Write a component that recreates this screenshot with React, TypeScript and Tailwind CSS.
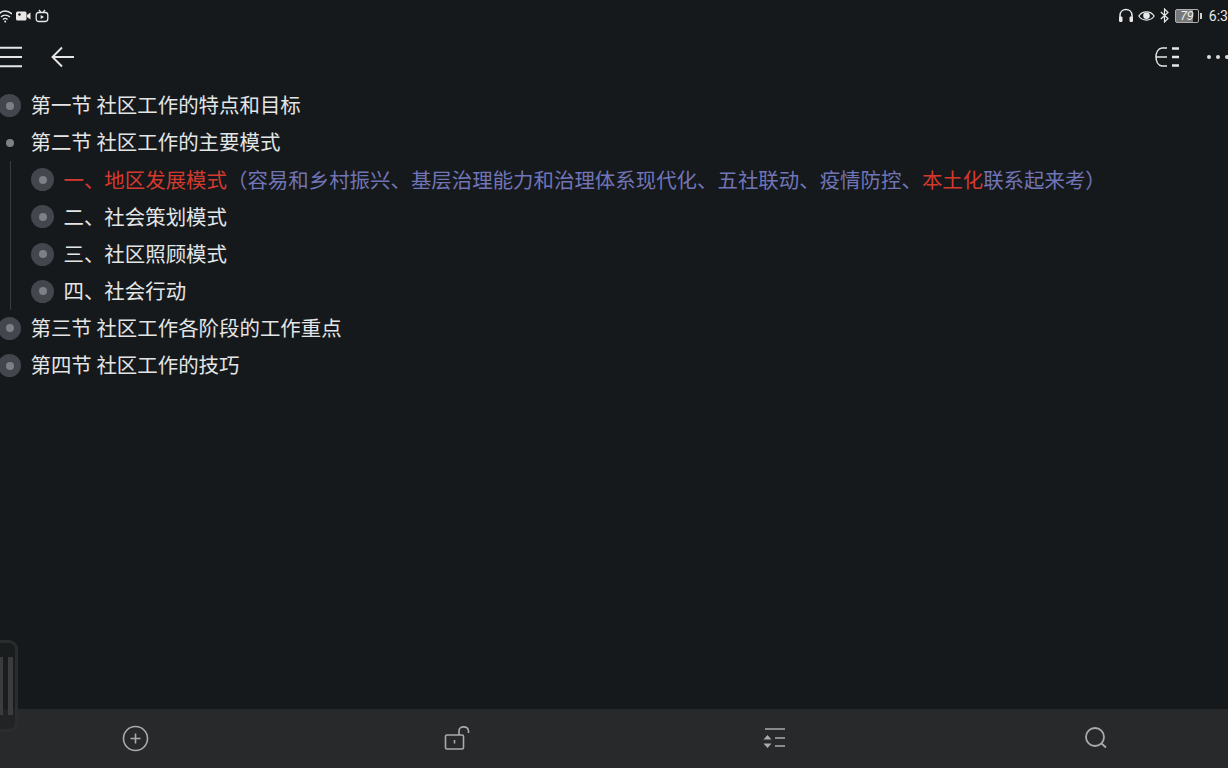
import type { ReactNode } from 'react';

const font = { fontFamily: '"Noto Sans CJK SC", "Noto Sans", sans-serif' };

// outline bullet with a halo (collapsed node)
const Bullet = ({ plain }: { plain?: boolean }) => (
  <span className={`flex h-[23px] w-[23px] shrink-0 items-center justify-center rounded-full ${plain ? '' : 'bg-[#43464c]'}`}>
    <span className="h-[8px] w-[8px] rounded-full bg-[#7d8085]" />
  </span>
);

const Row = ({ children, plain, child }: { children: ReactNode; plain?: boolean; child?: boolean }) => (
  <div className={`flex h-[37.15px] items-center whitespace-nowrap text-[20.45px] text-[#e4e5e6] ${child ? 'pl-[31px]' : 'ml-[-2px]'}`}>
    <Bullet plain={plain} />
    <span className="ml-[9.5px] pb-[2px]">{children}</span>
  </div>
);

const Red = ({ children }: { children: ReactNode }) => <span className="text-[#d5392e]">{children}</span>;
const Blue = ({ children }: { children: ReactNode }) => <span className="text-[#7174b6]">{children}</span>;

export default function App() {
  return (
    <div className="relative flex h-[768px] w-[1228px] flex-col overflow-hidden bg-[#15191b]" style={font}>
      {/* status bar */}
      <div className="flex h-[30px] shrink-0 items-center justify-between pt-[1px]">
        <div className="flex items-center gap-[4px] text-[#e8e8e8]">
          <svg width="12" height="14" viewBox="0 0 12 14" fill="none" stroke="currentColor" strokeWidth="1.4">
            <path d="M-1 5 C2 1 8 1 12 5" />
            <path d="M1 8 C3 5.5 7 5.5 10 8" />
            <path d="M3 10.5 C4.5 9 6 9 7.5 10.5" />
            <circle cx="5.2" cy="12.6" r="1" fill="currentColor" stroke="none" />
          </svg>
          <svg width="15" height="10" viewBox="0 0 15 10" fill="currentColor">
            <rect x="0" y="0.5" width="10.5" height="9" rx="1.5" />
            <path d="M11 4 L14.5 1.5 V8.5 L11 6 Z" />
            <circle cx="3.5" cy="3.5" r="1.2" fill="#15191b" />
          </svg>
          <svg width="14" height="14" viewBox="0 0 14 14" fill="none" stroke="currentColor" strokeWidth="1.3">
            <path d="M4 1 L6 3.5 M10 1 L8 3.5" />
            <rect x="1.2" y="3.5" width="11.6" height="9" rx="2.4" />
            <path d="M5.7 6 L9 8 L5.7 10 Z" fill="currentColor" stroke="none" />
          </svg>
        </div>
        <div className="flex items-center text-[#e8e8e8]">
          <svg width="16" height="15" viewBox="0 0 16 15" fill="none" stroke="currentColor" strokeWidth="1.5">
            <path d="M2 11 V7.5 C2 -0.5 14 -0.5 14 7.5 V11" />
            <rect x="1" y="8.5" width="3.5" height="5.5" rx="1.2" fill="currentColor" stroke="none" />
            <rect x="11.5" y="8.5" width="3.5" height="5.5" rx="1.2" fill="currentColor" stroke="none" />
          </svg>
          <svg className="ml-[4px]" width="17" height="12" viewBox="0 0 17 12" fill="none" stroke="currentColor" strokeWidth="1.2">
            <path d="M0.8 6 C4.5 0.5 12.5 0.5 16.2 6 C12.5 11.5 4.5 11.5 0.8 6 Z" />
            <circle cx="8.5" cy="5.8" r="3.3" fill="currentColor" stroke="none" />
          </svg>
          <svg className="ml-[5px]" width="9" height="15" viewBox="0 0 9 15" fill="none" stroke="currentColor" strokeWidth="1.2">
            <path d="M0.8 4 L8 10.5 L4.5 14 V1 L8 4.5 L0.8 11" />
          </svg>
          <div className="ml-[6px] flex h-[14px] w-[24px] items-center justify-center rounded-[2px] border border-[#b0b0b0] bg-[linear-gradient(90deg,#77787a_79%,#15191b_79%)] text-[12px] italic leading-none text-[#f0f0f0]" style={{ fontFamily: '"Liberation Sans", sans-serif' }}>
            79
          </div>
          <span className="ml-[1px] h-[6px] w-[2px] bg-[#cfcfcf]" />
          <span className="ml-[7px] text-[14px] leading-none" style={{ fontFamily: 'Roboto, sans-serif' }}>6:3</span>
        </div>
      </div>

      {/* toolbar */}
      <div className="flex h-[54px] shrink-0 items-center justify-between text-[#e6e6e6]">
        <div className="flex items-center gap-[28px]">
          <svg width="23" height="22" viewBox="0 0 23 22" stroke="currentColor" strokeWidth="2">
            <path d="M0 1.7 H22 M0 11 H22 M0 20.3 H22" />
          </svg>
          <svg width="24" height="22" viewBox="0 0 24 22" fill="none" stroke="currentColor" strokeWidth="1.9">
            <path d="M23 11 H2 M11 1.5 L1.5 11 L11 20.5" />
          </svg>
        </div>
        <div className="flex items-center gap-[27px]">
          <svg width="25" height="22" viewBox="0 0 25 22" fill="none" stroke="currentColor" strokeWidth="1.8">
            <path d="M12 2 H7 C-1 3 -1 19 7 20 H12 M0.5 11 H12" strokeWidth="1.5" />
            <path d="M17 2.5 H24 M17 11 H24 M17 19.5 H24" strokeWidth="2.4" />
          </svg>
          <div className="mr-[-1px] flex w-[22px] justify-between">
            <span className="h-[4px] w-[4px] rounded-full bg-[#dddddd]" />
            <span className="h-[4px] w-[4px] rounded-full bg-[#dddddd]" />
            <span className="h-[4px] w-[4px] rounded-full bg-[#dddddd]" />
          </div>
        </div>
      </div>

      {/* outline */}
      <div className="mt-[3px] flex-1">
        <Row>第一节 社区工作的特点和目标</Row>
        <Row plain>第二节 社区工作的主要模式</Row>
        <div className="ml-[10px] border-l border-[#3a3c3f]">
          <div className="ml-[-11px]">
            <Row child>
              <Red>一、地区发展模式</Red>
              <Blue>（容易和乡村振兴、基层治理能力和治理体系现代化、五社联动、疫情防控、</Blue>
              <Red>本土化</Red>
              <Blue>联系起来考）</Blue>
            </Row>
            <Row child>二、社会策划模式</Row>
            <Row child>三、社区照顾模式</Row>
            <Row child>四、社会行动</Row>
          </div>
        </div>
        <Row>第三节 社区工作各阶段的工作重点</Row>
        <Row>第四节 社区工作的技巧</Row>
      </div>

      {/* bottom bar */}
      <div className="flex h-[59px] shrink-0 items-center bg-[#28292b] pb-[1px] pl-[122px] text-[#a9aaab]">
        <svg width="27" height="27" viewBox="0 0 27 27" fill="none" stroke="currentColor" strokeWidth="1.6">
          <circle cx="13.5" cy="13.5" r="12" />
          <path d="M13.5 8.5 V18.5 M8.5 13.5 H18.5" />
        </svg>
        <svg className="ml-[295px]" width="26" height="26" viewBox="0 0 26 26" fill="none" stroke="currentColor" strokeWidth="1.6">
          <rect x="1.5" y="10" width="18" height="14" rx="1.5" />
          <path d="M10.5 15 V18.5" />
          <path d="M15 10 V6 C15 0.5 24 0.5 24.5 6 V8" />
        </svg>
        <svg className="ml-[293px]" width="24" height="22" viewBox="0 0 24 22" fill="none" stroke="currentColor" strokeWidth="1.7">
          <path d="M2 2 H22 M12 11 H22 M12 19 H22" />
          <path d="M0.5 12.5 L4.5 8 L8.5 12.5 Z M0.5 16.5 H8.5 L4.5 21 Z" fill="currentColor" stroke="none" />
        </svg>
        <svg className="ml-[297px]" width="24" height="24" viewBox="0 0 24 24" fill="none" stroke="currentColor" strokeWidth="1.8">
          <circle cx="11" cy="11" r="9" />
          <path d="M17.5 17.5 L22 21.5" />
        </svg>
      </div>

      {/* drag handle */}
      <div className="absolute bottom-[36px] left-[-10px] flex h-[92px] w-[28px] items-center justify-end gap-[5px] rounded-[9px] border-[3px] border-[#2a2d2f] bg-[#1c1f21]/60 pr-[2px]">
        <span className="h-[58px] w-[5px] bg-[#3a3c3e]" />
        <span className="h-[58px] w-[5px] bg-[#3a3c3e]" />
      </div>
    </div>
  );
}
